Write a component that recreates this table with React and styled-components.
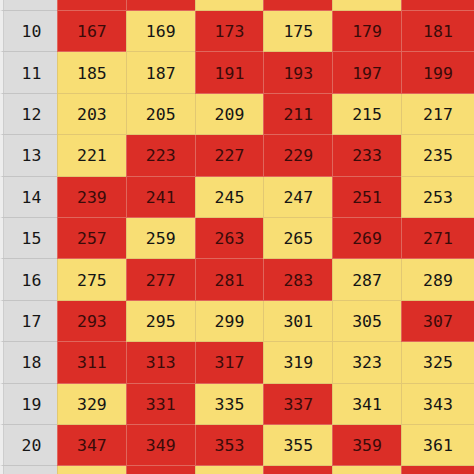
import React from 'react';
import styled, { createGlobalStyle } from 'styled-components';

const GlobalStyle = createGlobalStyle`
  html, body {
    margin: 0;
    padding: 0;
    background: #ffffff;
    overflow: hidden;
  }
`;

const OFFSETS = [0, 2, 6, 8, 12, 14];
const ROWS = [9, 10, 11, 12, 13, 14, 15, 16, 17, 18, 19, 20, 21];

const isPrime = (n) => {
  if (n < 2) return false;
  for (let i = 2; i * i <= n; i++) {
    if (n % i === 0) return false;
  }
  return true;
};

const App = () => (
  <Fragment>
    <GlobalStyle />
    <Sheet>
      {ROWS.map((row) => (
        <Row key={row}>
          <RowHeader>{row}</RowHeader>
          {OFFSETS.map((offset) => {
            const value = row * 18 - 13 + offset;
            return (
              <Cell key={offset} prime={isPrime(value) ? 1 : 0}>
                {value}
              </Cell>
            );
          })}
        </Row>
      ))}
    </Sheet>
  </Fragment>
);

const Fragment = React.Fragment;

const Sheet = styled.div`
  width: 474px;
  height: 474px;
  overflow: hidden;
  display: flex;
  flex-direction: column;
  font-family: "DejaVu Sans Mono", "Liberation Mono", monospace;
  font-size: 16.5px;
`;

const Row = styled.div`
  flex: 0 0 41.4px;
  display: grid;
  grid-template-columns: 57px repeat(5, 68.8px) 1fr;
  box-sizing: border-box;

  &:first-child {
    margin-top: -30.4px;
  }
`;

const RowHeader = styled.div`
  display: flex;
  align-items: center;
  justify-content: center;
  box-sizing: border-box;
  padding-left: 3px;
  padding-top: 1px;
  background: #dcdcdc;
  border-left: 3px solid #ededed;
  border-bottom: 1px solid #c4c4c4;
  box-shadow: inset 1px 0 0 #cdcdcd;
  color: #161616;
`;

const Cell = styled.div`
  display: flex;
  align-items: center;
  justify-content: center;
  box-sizing: border-box;
  padding-top: 1px;
  background: ${(props) => (props.prime ? '#db2e27' : '#f8de74')};
  color: ${(props) => (props.prime ? '#3a0b09' : '#141414')};
  border-left: 1px solid ${(props) => (props.prime ? '#e0665c' : '#e2c872')};
  border-bottom: 1px solid ${(props) => (props.prime ? '#e0665c' : '#e2c872')};
`;

export default App;
